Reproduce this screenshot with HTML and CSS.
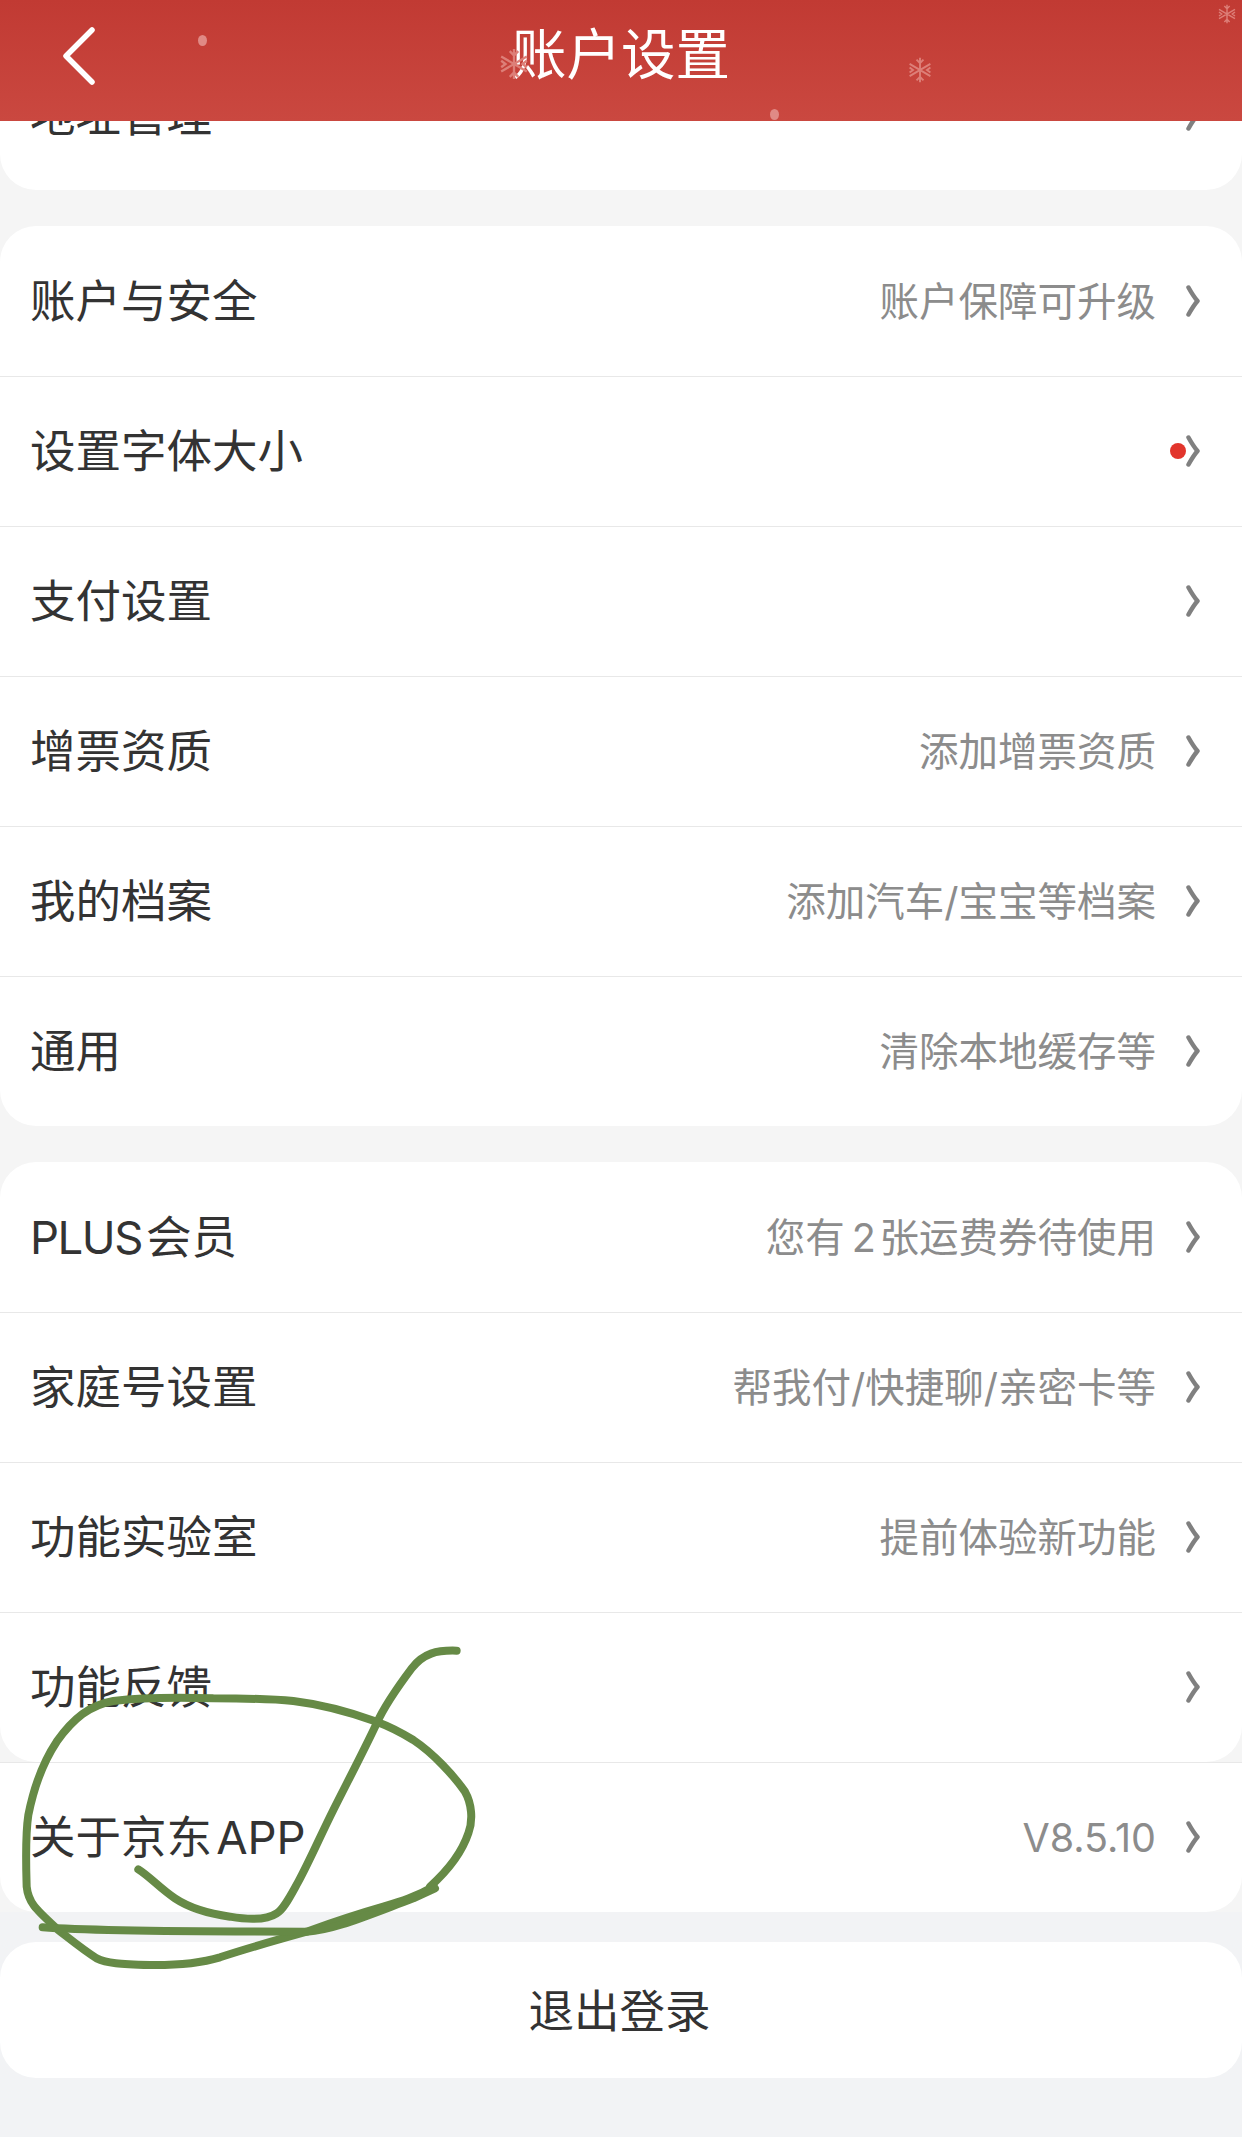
FILE: index.html
```html
<!doctype html>
<html lang="zh-CN"><head>
  <title>账户设置</title>
  <meta charset="utf-8">
  <link rel="stylesheet" href="styles.css">
</head><body>
<svg width="0" height="0" class="defs">
  <symbol id="chev" viewBox="0 0 14 32"><path d="M2.500 2.500 C5 7 8 12 11.500 16 C8 20 5 25 2.500 29.500" fill="none" stroke="currentColor" stroke-width="4.500" stroke-linecap="round" stroke-linejoin="round"/></symbol>
  <symbol id="flake" viewBox="0 0 30 30"><path d="M15 1V29M3 8L27 22M27 8L3 22M11 3L15 7L19 3M11 27L15 23L19 27M3 12L7 15L3 18M27 12L23 15L27 18" fill="none" stroke="currentColor" stroke-width="2.200"/></symbol>
</svg>

<header class="topbar">
  <svg class="back" width="34" height="58" viewBox="0 0 34 58"><path d="M30 3L4 29L30 55" fill="none" stroke="#fff" stroke-width="5.500" stroke-linecap="round" stroke-linejoin="round"/></svg>
  <h1>账户设置</h1>
  <i class="dot dot-a"></i>
  <i class="dot dot-b"></i>
  <svg class="flake flake-a"><use href="#flake"/></svg>
  <svg class="flake flake-b"><use href="#flake"/></svg>
  <svg class="flake flake-c"><use href="#flake"/></svg>
</header>

<section class="card card-cut">
  <div class="row"><span class="label">地址管理</span><svg class="chev"><use href="#chev"/></svg></div>
</section>

<section class="card">
  <div class="row"><span class="label">账户与安全</span><span class="value">账户保障可升级</span><svg class="chev"><use href="#chev"/></svg></div>
  <div class="row"><span class="label">设置字体大小</span><i class="reddot"></i><svg class="chev"><use href="#chev"/></svg></div>
  <div class="row"><span class="label">支付设置</span><svg class="chev"><use href="#chev"/></svg></div>
  <div class="row"><span class="label">增票资质</span><span class="value">添加增票资质</span><svg class="chev"><use href="#chev"/></svg></div>
  <div class="row"><span class="label">我的档案</span><span class="value">添加汽车/宝宝等档案</span><svg class="chev"><use href="#chev"/></svg></div>
  <div class="row"><span class="label">通用</span><span class="value">清除本地缓存等</span><svg class="chev"><use href="#chev"/></svg></div>
</section>

<section class="card card-flush">
  <div class="row"><span class="label"><span class="latin">PLUS</span>&#8202;会员</span><span class="value">您有&#8201;2&#8202;张运费券待使用</span><svg class="chev"><use href="#chev"/></svg></div>
  <div class="row"><span class="label">家庭号设置</span><span class="value">帮我付/快捷聊/亲密卡等</span><svg class="chev"><use href="#chev"/></svg></div>
  <div class="row"><span class="label">功能实验室</span><span class="value">提前体验新功能</span><svg class="chev"><use href="#chev"/></svg></div>
  <div class="row"><span class="label">功能反馈</span><svg class="chev"><use href="#chev"/></svg></div>
</section>
<div class="sep"></div>
<section class="card card-about">
  <div class="row"><span class="label">关于京东&#8202;APP</span><span class="value">V8.5.10</span><svg class="chev"><use href="#chev"/></svg></div>
</section>

<div class="foot">
  <button class="logout">退出登录</button>
</div>

<!-- green pen marks drawn over the screenshot -->
<svg class="scribble" width="520" height="400" viewBox="0 0 1560 1200">
  <g fill="none" stroke="#668a46" stroke-width="24" stroke-linecap="round" stroke-linejoin="round">
    <path d="M1370 92C1310 90 1270 100 1235 145C1190 205 1150 265 1130 310C1090 395 1040 490 1000 570C960 650 930 720 895 785C870 830 850 870 830 880C800 900 750 900 690 890C620 880 570 865 525 835C480 805 450 770 415 748"/>
    <path d="M1290 800C1340 755 1385 700 1405 640C1420 600 1415 550 1395 515C1360 465 1300 400 1240 360C1200 335 1170 320 1130 305C1060 280 980 255 880 243C800 235 720 235 640 235C540 232 430 232 340 243C270 255 220 295 170 365C130 425 100 510 85 585C75 650 78 730 80 800C85 850 110 870 175 930C220 965 250 990 290 1015C320 1030 360 1032 450 1035C530 1036 600 1030 660 1012C740 985 830 960 920 935C990 910 1080 880 1150 860C1200 845 1250 830 1300 800"/>
    <path d="M128 922C300 935 700 935 920 935C1000 930 1080 895 1240 835L1305 805"/>
  </g>
</svg>
</body></html>
```

FILE: styles.css
```css
* {
    box-sizing: border-box;
}

html, body {
    margin: 0;
    padding: 0;
}

body {
    position: relative;
    width: 1242px;
    height: 2137px;
    overflow: hidden;
    background: #f5f5f5;
    font-family: Inter, "Noto Sans CJK SC", sans-serif;
    color: #333;
}

.defs {
    display: block;
    height: 0;
}

.topbar {
    position: relative;
    height: 121px;
    background: linear-gradient(#c13a33, #ca4840);
    display: flex;
    align-items: center;
    justify-content: center;
}

.topbar h1 {
    margin: 0 0 14px 0;
    font-size: 54.500px;
    font-weight: 400;
    line-height: 70px;
    color: #fff;
}

.back {
    position: absolute;
    left: 62px;
    top: 27px;
}

.dot {
    position: absolute;
    width: 9px;
    height: 11px;
    border-radius: 50%;
    background: #e08a85;
}

.dot-a { left: 198px; top: 35px; }
.dot-b { left: 770px; top: 109px; }

.flake {
    position: absolute;
    color: #dd7f78;
}

.flake-a { left: 498px; top: 48px; width: 32px; height: 32px; }
.flake-b { left: 907px; top: 57px; width: 26px; height: 26px; }
.flake-c { left: 1217px; top: 4px; width: 20px; height: 20px; }

.card {
    background: #fff;
    border-radius: 36px;
    margin-bottom: 36px;
}

.card-cut {
    height: 69px;
    overflow: hidden;
    border-radius: 0 0 36px 36px;
    display: flex;
    flex-direction: column;
    justify-content: flex-end;
}

.card-cut .row {
    flex: none;
}

.card-flush {
    margin-bottom: 0;
}

.card-about {
    border-radius: 0 0 36px 36px;
    margin-bottom: 0;
}

.card-about .row {
    height: 149px;
}

.row {
    height: 150px;
    padding: 0 42px 0 30px;
    display: flex;
    align-items: center;
    border-top: 1px solid transparent;
}

.row + .row {
    border-top-color: #e8e8e8;
}

.label {
    flex: 1;
    font-size: 45.500px;
    line-height: 60px;
    color: #333;
}

.latin {
    letter-spacing: -1.500px;
}

.value {
    font-size: 39.500px;
    line-height: 60px;
    color: #8c8c8c;
    margin-right: 30px;
}

.reddot {
    width: 16px;
    height: 16px;
    margin-bottom: 2px;
    border-radius: 50%;
    background: #e2352c;
}

.chev {
    width: 14px;
    height: 32px;
    margin-bottom: 2px;
    color: #808080;
}

.sep {
    height: 1px;
    background: #e8e8e8;
}

.foot {
    background: #f2f3f5;
    padding-top: 30px;
    height: 225px;
}

.logout {
    display: block;
    width: 100%;
    height: 136px;
    padding: 0 3px 4px 0;
    border: 0;
    border-radius: 36px;
    background: #fff;
    font: inherit;
    font-size: 45.500px;
    color: #333;
}

.scribble {
    position: absolute;
    left: 0;
    top: 1620px;
}
```
